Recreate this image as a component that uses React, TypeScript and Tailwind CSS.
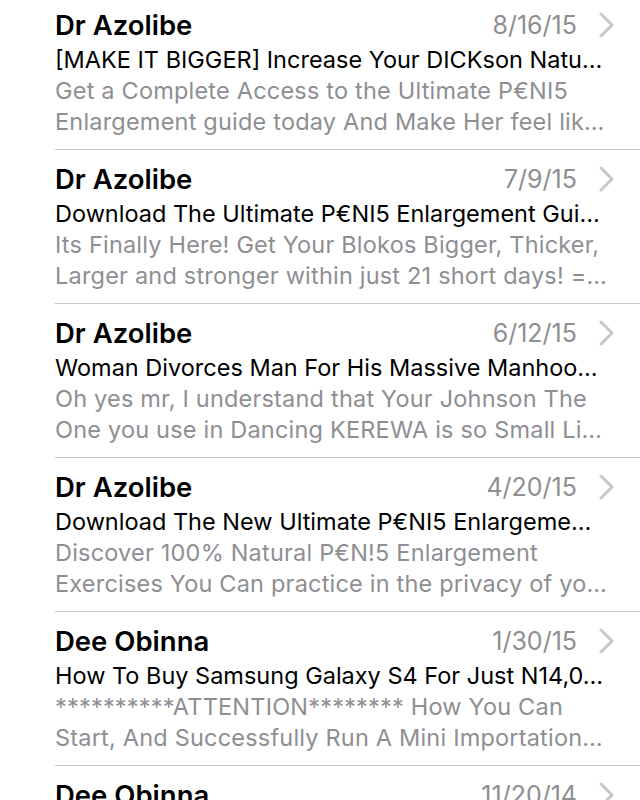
const mails = [
  {
    from: "Dr Azolibe",
    date: "8/16/15",
    subject: "[MAKE IT BIGGER] Increase Your DICKson Natu…",
    preview: ["Get a Complete Access to the Ultimate P€NI5", "Enlargement guide today And Make Her feel lik…"],
  },
  {
    from: "Dr Azolibe",
    date: "7/9/15",
    subject: "Download The Ultimate P€NI5 Enlargement Gui…",
    preview: ["Its Finally Here! Get Your Blokos Bigger, Thicker,", "Larger and stronger within just 21 short days! =…"],
  },
  {
    from: "Dr Azolibe",
    date: "6/12/15",
    subject: "Woman Divorces Man For His Massive Manhoo…",
    preview: ["Oh yes mr, I understand that Your Johnson The", "One you use in Dancing KEREWA is so Small Li…"],
  },
  {
    from: "Dr Azolibe",
    date: "4/20/15",
    subject: "Download The New Ultimate P€NI5 Enlargeme…",
    preview: ["Discover 100% Natural P€N!5 Enlargement", "Exercises You Can practice in the privacy of yo…"],
  },
  {
    from: "Dee Obinna",
    date: "1/30/15",
    subject: "How To Buy Samsung Galaxy S4 For Just N14,0…",
    preview: ["**********ATTENTION******** How You Can", "Start, And Successfully Run A Mini Importation…"],
  },
  {
    from: "Dee Obinna",
    date: "11/20/14",
    subject: "",
    preview: ["", ""],
  },
];

const Chevron = () => (
  <svg width="16" height="26" viewBox="0 0 16 26" className="shrink-0">
    <path d="M2 2 L13 13 L2 24" fill="none" stroke="#c7c7cc" strokeWidth="3" strokeLinecap="round" strokeLinejoin="round" />
  </svg>
);

const App = () => {
  return (
    <div className="h-[800px] w-[640px] overflow-hidden bg-white font-['Inter',sans-serif]">
      {/* List */}
      <div className="-mt-[4px]">
        {mails.map((m, i) => (
          <div key={i} className="pl-[55px]">
            <div className="border-b border-[#c8c7cc] pb-[12px] pt-[12px]">
              {/* Top row */}
              <div className="flex h-[34px] items-center pr-[25px]">
                <span className="flex-1 text-[27.5px] font-semibold leading-[34px] text-black">{m.from}</span>
                <span className="mr-[22px] text-[25px] leading-[34px] text-[#8e8e93]">{m.date}</span>
                <Chevron />
              </div>
              <div className="mt-[2px] truncate pr-[24px] text-[23.5px] leading-[31px] text-black">{m.subject}</div>
              {m.preview.map((p, j) => (
                <div key={j} className="h-[31px] truncate pr-[24px] text-[23.5px] leading-[31px] tracking-[0.2px] text-[#8e8e93]">
                  {p}
                </div>
              ))}
            </div>
          </div>
        ))}
      </div>
    </div>
  );
};

export default App;
